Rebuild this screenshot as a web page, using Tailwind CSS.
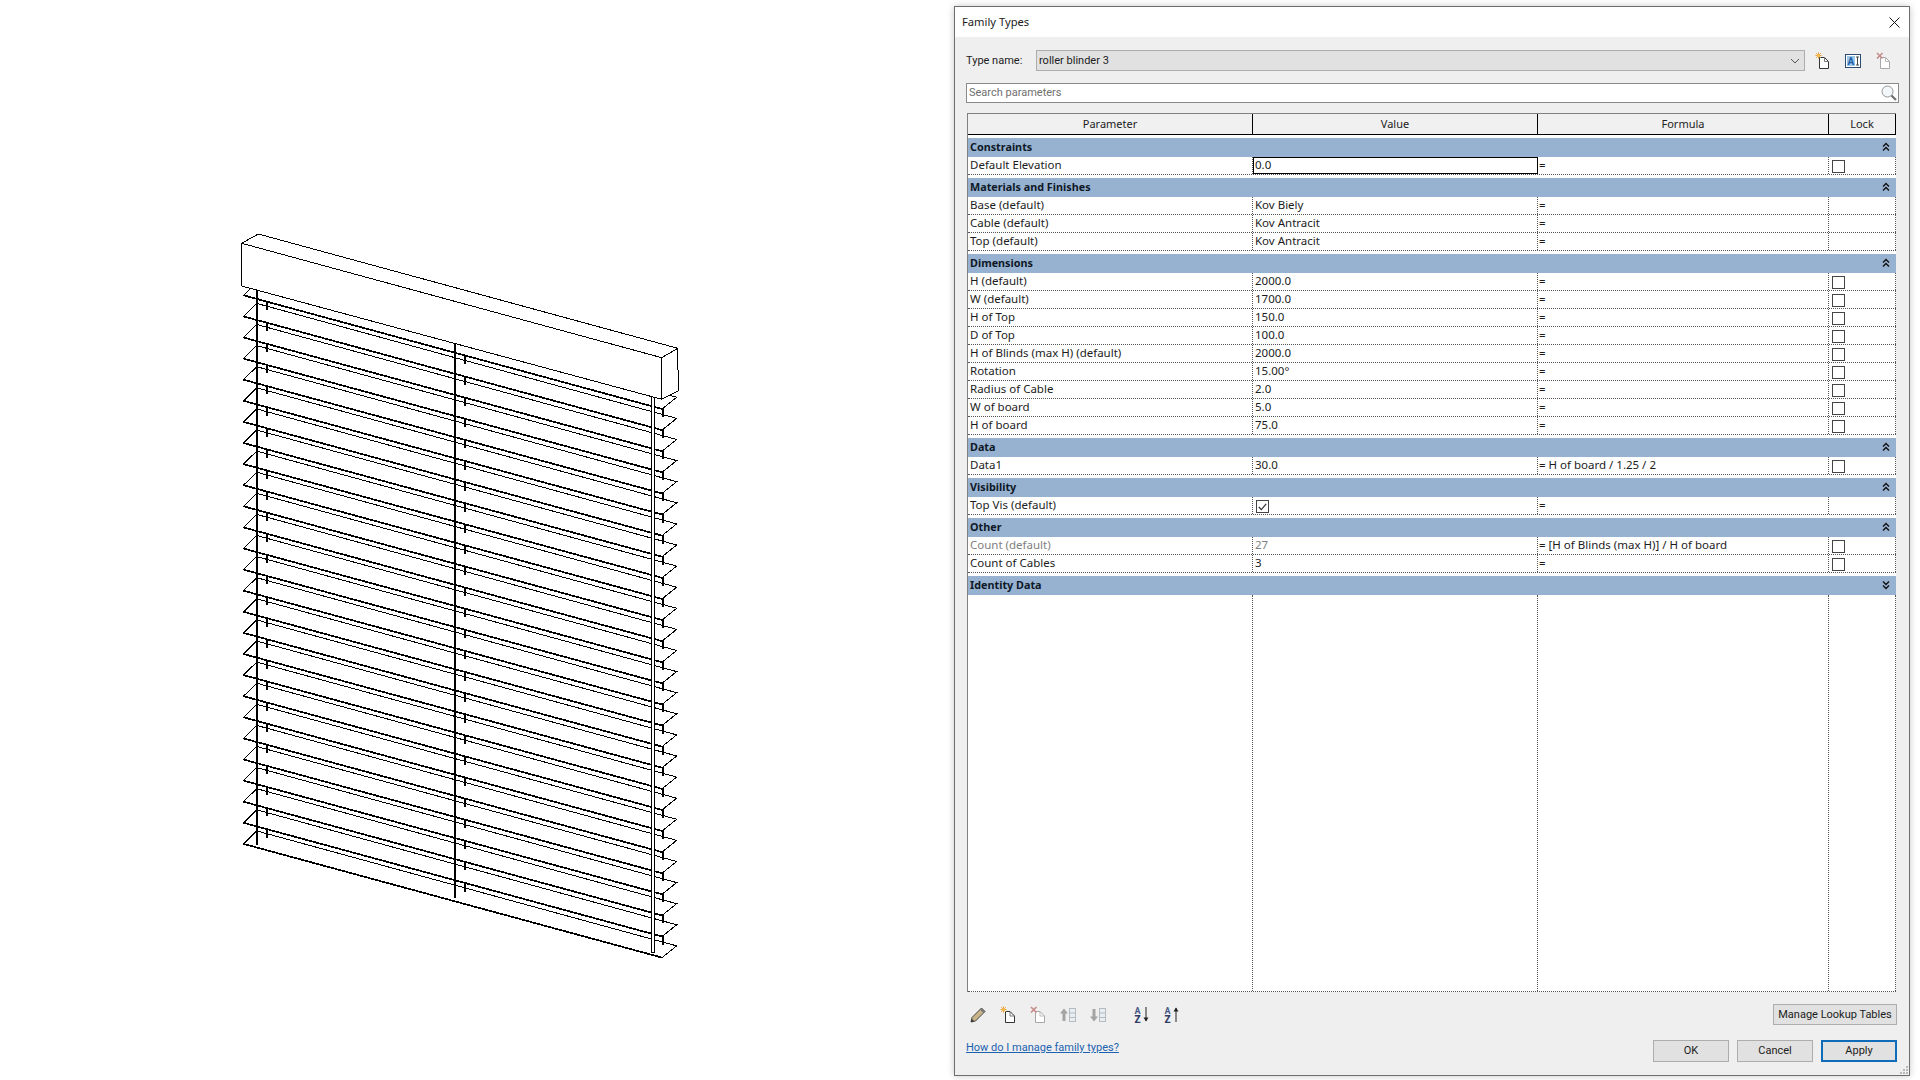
<!DOCTYPE html>
<html lang="en">
<head>
  <meta charset="UTF-8">
  <title>Family Types</title>
  <script src="https://cdn.jsdelivr.net/npm/@tailwindcss/browser@4"></script>
</head>
<body class="bg-white h-screen overflow-hidden flex font-['Noto_Sans',sans-serif] text-[11.5px] leading-[16px] text-[#1c1c1c]">

  <!-- Model view -->
  <div class="w-[954px] h-[1080px] shrink-0">
    <svg id="blinds" width="954" height="1080" viewBox="0 0 954 1080" shape-rendering="crispEdges"></svg>
  </div>

  <!-- Dialog -->
  <div class="w-[956px] h-[1070px] mt-[6px] shrink-0 flex flex-col bg-[#efefef] border border-[#6e6e6e] shadow-[0_0_7px_rgba(0,0,0,0.22)] relative">

    <div class="h-[30px] shrink-0 bg-white flex items-center justify-between pl-[7px] pr-[9px]">
      <span class="text-[11.2px]">Family Types</span>
      <svg width="11" height="11" viewBox="0 0 11 11" fill="none" stroke="#111" stroke-width="1"><path d="M0.5 0.5 10.5 10.5M10.5 0.5 0.5 10.5"/></svg>
    </div>

    <div class="flex-1 flex flex-col pl-[11px] pr-[10px] pb-[13px] min-h-0">
      <!-- Type name -->
      <div class="mt-[13px] h-[21px] shrink-0 flex items-center font-['Roboto',sans-serif] text-[11px]">
        <span class="w-[70px] shrink-0">Type name:</span>
        <div class="w-[769px] h-[21px] shrink-0 bg-[#e1e1e1] border border-[#adadad] flex items-center justify-between pl-[2px] pr-[4px]">
          <span>roller blinder 3</span>
          <svg width="10" height="6" viewBox="0 0 10 6" fill="none" stroke="#555"><path d="M1 1 5 5 9 1"/></svg>
        </div>
        <div class="ml-[10px] w-[15px] h-[17px]">
          <svg width="15" height="17" viewBox="0 0 15 17" fill="none">
            <path d="M4.5 5.5H9.5L13.5 9.5V16.5H4.5Z" fill="#fff" stroke="#333"/><path d="M9.5 5.5V9.5H13.5" stroke="#777"/>
            <path d="M3.5 0.5V6.5M0.5 3.5H6.5M1.3 1.3 5.7 5.7M5.7 1.3 1.3 5.7" stroke="#e39a2c"/>
            <circle cx="3.5" cy="3.5" r="1.8" fill="#f2b752"/>
          </svg>
        </div>
        <div class="ml-[15px] w-[16px] h-[14px]">
          <svg width="16" height="14" viewBox="0 0 16 14" fill="none">
            <rect x="0.5" y="0.5" width="15" height="13" fill="#fff" stroke="#2c4a72"/>
            <rect x="2" y="2" width="8" height="10" fill="#9cc6ea"/>
            <text x="2.5" y="11" font-size="10" font-weight="700" fill="#1b5ea6">A</text>
            <path d="M11 3H14M11 11H14M12.5 3V11" stroke="#444"/>
          </svg>
        </div>
        <div class="ml-[15px] w-[15px] h-[17px]">
          <svg width="15" height="17" viewBox="0 0 15 17" fill="none">
            <path d="M4.5 5.5H9.5L13.5 9.5V16.5H4.5Z" fill="#fff" stroke="#a8a8a8"/><path d="M9.5 5.5V9.5H13.5" stroke="#bbb"/>
            <path d="M1 1 6.5 6.5M6.5 1 1 6.5" stroke="#c78a86" stroke-width="1.6"/>
          </svg>
        </div>
      </div>

      <!-- Search -->
      <div class="mt-[12px] h-[20px] shrink-0 bg-white border border-[#8a8a8a] flex items-center justify-between pl-[2px] pr-[1px] font-['Roboto',sans-serif] text-[11px]">
        <span class="text-[#6f6f6f] pb-[1px]">Search parameters</span>
        <svg width="16" height="16" viewBox="0 0 16 16" fill="none">
          <circle cx="6.5" cy="6.5" r="5.5" fill="#f3f7fa" stroke="#8d9499"/>
          <path d="M10.5 10.5 15 15" stroke="#6f6f6f" stroke-width="2.2"/>
        </svg>
      </div>

      <!-- Parameter table -->
      <div class="mt-[10px] ml-[1px] mr-[3px] flex-1 min-h-0 flex flex-col bg-white border-t border-l border-[#808080]">
        <div class="h-[21px] shrink-0 grid grid-cols-[285px_285px_291px_67px] bg-[#f0f0f0] border-b border-black text-[11px]">
          <div class="border-r border-black flex items-center justify-center">Parameter</div>
          <div class="border-r border-black flex items-center justify-center">Value</div>
          <div class="border-r border-black flex items-center justify-center">Formula</div>
          <div class="border-r border-black flex items-center justify-center">Lock</div>
        </div>

        <!-- Constraints -->
        <div class="mt-[3px] h-[19px] shrink-0 bg-[#97b2d1] flex items-center justify-between pl-[2px] pr-[6px] pb-[1px] font-bold text-[10.8px] text-[#0e1826]">
          <span>Constraints</span>
          <svg width="8" height="10" viewBox="0 0 8 10" fill="none" stroke="#111" stroke-width="1.4"><path d="M1 4.5 4 1.5 7 4.5M1 8.5 4 5.5 7 8.5"/></svg>
        </div>
        <div class="h-[18px] shrink-0 grid grid-cols-[285px_285px_291px_67px] border-b border-dotted border-[#555]">
          <div class="border-r border-dotted border-[#555] pl-[2px]">Default Elevation</div>
          <div class="border border-black pl-[1px] leading-[14px]">0.0</div>
          <div class="border-r border-dotted border-[#555] pl-[1px]">=</div>
          <div class="border-r border-dotted border-[#555] pl-[3px] pt-[3px]"><div class="w-[13px] h-[13px] bg-white border border-[#444]"></div></div>
        </div>

        <!-- Materials and Finishes -->
        <div class="mt-[3px] h-[19px] shrink-0 bg-[#97b2d1] flex items-center justify-between pl-[2px] pr-[6px] pb-[1px] font-bold text-[10.8px] text-[#0e1826]">
          <span>Materials and Finishes</span>
          <svg width="8" height="10" viewBox="0 0 8 10" fill="none" stroke="#111" stroke-width="1.4"><path d="M1 4.5 4 1.5 7 4.5M1 8.5 4 5.5 7 8.5"/></svg>
        </div>
        <div class="h-[18px] shrink-0 grid grid-cols-[285px_285px_291px_67px] border-b border-dotted border-[#555]">
          <div class="border-r border-dotted border-[#555] pl-[2px]">Base (default)</div>
          <div class="border-r border-dotted border-[#555] pl-[2px]">Kov Biely</div>
          <div class="border-r border-dotted border-[#555] pl-[1px]">=</div>
          <div class="border-r border-dotted border-[#555]"></div>
        </div>
        <div class="h-[18px] shrink-0 grid grid-cols-[285px_285px_291px_67px] border-b border-dotted border-[#555]">
          <div class="border-r border-dotted border-[#555] pl-[2px]">Cable (default)</div>
          <div class="border-r border-dotted border-[#555] pl-[2px]">Kov Antracit</div>
          <div class="border-r border-dotted border-[#555] pl-[1px]">=</div>
          <div class="border-r border-dotted border-[#555]"></div>
        </div>
        <div class="h-[18px] shrink-0 grid grid-cols-[285px_285px_291px_67px] border-b border-dotted border-[#555]">
          <div class="border-r border-dotted border-[#555] pl-[2px]">Top (default)</div>
          <div class="border-r border-dotted border-[#555] pl-[2px]">Kov Antracit</div>
          <div class="border-r border-dotted border-[#555] pl-[1px]">=</div>
          <div class="border-r border-dotted border-[#555]"></div>
        </div>

        <!-- Dimensions -->
        <div class="mt-[3px] h-[19px] shrink-0 bg-[#97b2d1] flex items-center justify-between pl-[2px] pr-[6px] pb-[1px] font-bold text-[10.8px] text-[#0e1826]">
          <span>Dimensions</span>
          <svg width="8" height="10" viewBox="0 0 8 10" fill="none" stroke="#111" stroke-width="1.4"><path d="M1 4.5 4 1.5 7 4.5M1 8.5 4 5.5 7 8.5"/></svg>
        </div>
        <div class="h-[18px] shrink-0 grid grid-cols-[285px_285px_291px_67px] border-b border-dotted border-[#555]">
          <div class="border-r border-dotted border-[#555] pl-[2px]">H (default)</div>
          <div class="border-r border-dotted border-[#555] pl-[2px]">2000.0</div>
          <div class="border-r border-dotted border-[#555] pl-[1px]">=</div>
          <div class="border-r border-dotted border-[#555] pl-[3px] pt-[3px]"><div class="w-[13px] h-[13px] bg-white border border-[#444]"></div></div>
        </div>
        <div class="h-[18px] shrink-0 grid grid-cols-[285px_285px_291px_67px] border-b border-dotted border-[#555]">
          <div class="border-r border-dotted border-[#555] pl-[2px]">W (default)</div>
          <div class="border-r border-dotted border-[#555] pl-[2px]">1700.0</div>
          <div class="border-r border-dotted border-[#555] pl-[1px]">=</div>
          <div class="border-r border-dotted border-[#555] pl-[3px] pt-[3px]"><div class="w-[13px] h-[13px] bg-white border border-[#444]"></div></div>
        </div>
        <div class="h-[18px] shrink-0 grid grid-cols-[285px_285px_291px_67px] border-b border-dotted border-[#555]">
          <div class="border-r border-dotted border-[#555] pl-[2px]">H of Top</div>
          <div class="border-r border-dotted border-[#555] pl-[2px]">150.0</div>
          <div class="border-r border-dotted border-[#555] pl-[1px]">=</div>
          <div class="border-r border-dotted border-[#555] pl-[3px] pt-[3px]"><div class="w-[13px] h-[13px] bg-white border border-[#444]"></div></div>
        </div>
        <div class="h-[18px] shrink-0 grid grid-cols-[285px_285px_291px_67px] border-b border-dotted border-[#555]">
          <div class="border-r border-dotted border-[#555] pl-[2px]">D of Top</div>
          <div class="border-r border-dotted border-[#555] pl-[2px]">100.0</div>
          <div class="border-r border-dotted border-[#555] pl-[1px]">=</div>
          <div class="border-r border-dotted border-[#555] pl-[3px] pt-[3px]"><div class="w-[13px] h-[13px] bg-white border border-[#444]"></div></div>
        </div>
        <div class="h-[18px] shrink-0 grid grid-cols-[285px_285px_291px_67px] border-b border-dotted border-[#555]">
          <div class="border-r border-dotted border-[#555] pl-[2px]">H of Blinds (max H) (default)</div>
          <div class="border-r border-dotted border-[#555] pl-[2px]">2000.0</div>
          <div class="border-r border-dotted border-[#555] pl-[1px]">=</div>
          <div class="border-r border-dotted border-[#555] pl-[3px] pt-[3px]"><div class="w-[13px] h-[13px] bg-white border border-[#444]"></div></div>
        </div>
        <div class="h-[18px] shrink-0 grid grid-cols-[285px_285px_291px_67px] border-b border-dotted border-[#555]">
          <div class="border-r border-dotted border-[#555] pl-[2px]">Rotation</div>
          <div class="border-r border-dotted border-[#555] pl-[2px]">15.00°</div>
          <div class="border-r border-dotted border-[#555] pl-[1px]">=</div>
          <div class="border-r border-dotted border-[#555] pl-[3px] pt-[3px]"><div class="w-[13px] h-[13px] bg-white border border-[#444]"></div></div>
        </div>
        <div class="h-[18px] shrink-0 grid grid-cols-[285px_285px_291px_67px] border-b border-dotted border-[#555]">
          <div class="border-r border-dotted border-[#555] pl-[2px]">Radius of Cable</div>
          <div class="border-r border-dotted border-[#555] pl-[2px]">2.0</div>
          <div class="border-r border-dotted border-[#555] pl-[1px]">=</div>
          <div class="border-r border-dotted border-[#555] pl-[3px] pt-[3px]"><div class="w-[13px] h-[13px] bg-white border border-[#444]"></div></div>
        </div>
        <div class="h-[18px] shrink-0 grid grid-cols-[285px_285px_291px_67px] border-b border-dotted border-[#555]">
          <div class="border-r border-dotted border-[#555] pl-[2px]">W of board</div>
          <div class="border-r border-dotted border-[#555] pl-[2px]">5.0</div>
          <div class="border-r border-dotted border-[#555] pl-[1px]">=</div>
          <div class="border-r border-dotted border-[#555] pl-[3px] pt-[3px]"><div class="w-[13px] h-[13px] bg-white border border-[#444]"></div></div>
        </div>
        <div class="h-[18px] shrink-0 grid grid-cols-[285px_285px_291px_67px] border-b border-dotted border-[#555]">
          <div class="border-r border-dotted border-[#555] pl-[2px]">H of board</div>
          <div class="border-r border-dotted border-[#555] pl-[2px]">75.0</div>
          <div class="border-r border-dotted border-[#555] pl-[1px]">=</div>
          <div class="border-r border-dotted border-[#555] pl-[3px] pt-[3px]"><div class="w-[13px] h-[13px] bg-white border border-[#444]"></div></div>
        </div>

        <!-- Data -->
        <div class="mt-[3px] h-[19px] shrink-0 bg-[#97b2d1] flex items-center justify-between pl-[2px] pr-[6px] pb-[1px] font-bold text-[10.8px] text-[#0e1826]">
          <span>Data</span>
          <svg width="8" height="10" viewBox="0 0 8 10" fill="none" stroke="#111" stroke-width="1.4"><path d="M1 4.5 4 1.5 7 4.5M1 8.5 4 5.5 7 8.5"/></svg>
        </div>
        <div class="h-[18px] shrink-0 grid grid-cols-[285px_285px_291px_67px] border-b border-dotted border-[#555]">
          <div class="border-r border-dotted border-[#555] pl-[2px]">Data1</div>
          <div class="border-r border-dotted border-[#555] pl-[2px]">30.0</div>
          <div class="border-r border-dotted border-[#555] pl-[1px]">= H of board / 1.25 / 2</div>
          <div class="border-r border-dotted border-[#555] pl-[3px] pt-[3px]"><div class="w-[13px] h-[13px] bg-white border border-[#444]"></div></div>
        </div>

        <!-- Visibility -->
        <div class="mt-[3px] h-[19px] shrink-0 bg-[#97b2d1] flex items-center justify-between pl-[2px] pr-[6px] pb-[1px] font-bold text-[10.8px] text-[#0e1826]">
          <span>Visibility</span>
          <svg width="8" height="10" viewBox="0 0 8 10" fill="none" stroke="#111" stroke-width="1.4"><path d="M1 4.5 4 1.5 7 4.5M1 8.5 4 5.5 7 8.5"/></svg>
        </div>
        <div class="h-[18px] shrink-0 grid grid-cols-[285px_285px_291px_67px] border-b border-dotted border-[#555]">
          <div class="border-r border-dotted border-[#555] pl-[2px]">Top Vis (default)</div>
          <div class="border-r border-dotted border-[#555] pl-[3px] pt-[3px]">
            <div class="w-[13px] h-[13px] bg-white border border-[#444] flex items-center justify-center">
              <svg width="9" height="8" viewBox="0 0 9 8" fill="none" stroke="#333" stroke-width="1.2"><path d="M0.8 4 3.3 6.6 8.2 0.8"/></svg>
            </div>
          </div>
          <div class="border-r border-dotted border-[#555] pl-[1px]">=</div>
          <div class="border-r border-dotted border-[#555]"></div>
        </div>

        <!-- Other -->
        <div class="mt-[3px] h-[19px] shrink-0 bg-[#97b2d1] flex items-center justify-between pl-[2px] pr-[6px] pb-[1px] font-bold text-[10.8px] text-[#0e1826]">
          <span>Other</span>
          <svg width="8" height="10" viewBox="0 0 8 10" fill="none" stroke="#111" stroke-width="1.4"><path d="M1 4.5 4 1.5 7 4.5M1 8.5 4 5.5 7 8.5"/></svg>
        </div>
        <div class="h-[18px] shrink-0 grid grid-cols-[285px_285px_291px_67px] border-b border-dotted border-[#555]">
          <div class="border-r border-dotted border-[#555] pl-[2px] text-[#808080]">Count (default)</div>
          <div class="border-r border-dotted border-[#555] pl-[2px] text-[#808080]">27</div>
          <div class="border-r border-dotted border-[#555] pl-[1px]">= [H of Blinds (max H)] / H of board</div>
          <div class="border-r border-dotted border-[#555] pl-[3px] pt-[3px]"><div class="w-[13px] h-[13px] bg-white border border-[#444]"></div></div>
        </div>
        <div class="h-[18px] shrink-0 grid grid-cols-[285px_285px_291px_67px] border-b border-dotted border-[#555]">
          <div class="border-r border-dotted border-[#555] pl-[2px]">Count of Cables</div>
          <div class="border-r border-dotted border-[#555] pl-[2px]">3</div>
          <div class="border-r border-dotted border-[#555] pl-[1px]">=</div>
          <div class="border-r border-dotted border-[#555] pl-[3px] pt-[3px]"><div class="w-[13px] h-[13px] bg-white border border-[#444]"></div></div>
        </div>

        <!-- Identity Data -->
        <div class="mt-[3px] h-[19px] shrink-0 bg-[#97b2d1] flex items-center justify-between pl-[2px] pr-[6px] pb-[1px] font-bold text-[10.8px] text-[#0e1826]">
          <span>Identity Data</span>
          <svg width="8" height="10" viewBox="0 0 8 10" fill="none" stroke="#111" stroke-width="1.4"><path d="M1 1.5 4 4.5 7 1.5M1 5.5 4 8.5 7 5.5"/></svg>
        </div>

        <!-- Empty remainder -->
        <div class="flex-1 min-h-0 grid grid-cols-[285px_285px_291px_67px] border-b border-dotted border-[#555]">
          <div class="border-r border-dotted border-[#555]"></div>
          <div class="border-r border-dotted border-[#555]"></div>
          <div class="border-r border-dotted border-[#555]"></div>
          <div class="border-r border-dotted border-[#555]"></div>
        </div>
      </div>

      <!-- Bottom toolbar -->
      <div class="mt-[12px] mr-[2px] h-[21px] shrink-0 flex items-center justify-between pl-[4px] font-['Roboto',sans-serif] text-[11px]">
        <div class="flex items-center gap-[14px]">
          <svg width="16" height="17" viewBox="0 0 16 17" fill="none">
            <path d="M1 16 2 11.5 11.5 2 15 5.5 5.5 15Z" fill="#c9b48a" stroke="#444"/>
            <path d="M11.5 2 15 5.5 13.4 7.1 9.9 3.6Z" fill="#777"/>
            <path d="M1 16 2 13 4 15Z" fill="#333"/>
          </svg>
          <svg width="16" height="17" viewBox="0 0 16 17" fill="none">
            <path d="M5.5 5.5H10L14.5 10V16.5H5.5Z" fill="#fff" stroke="#333"/><path d="M10 5.5V10H14.5" stroke="#777"/>
            <path d="M3.5 0.5V6.5M0.5 3.5H6.5M1.3 1.3 5.7 5.7M5.7 1.3 1.3 5.7" stroke="#e39a2c"/>
            <circle cx="3.5" cy="3.5" r="1.8" fill="#f2b752"/>
          </svg>
          <svg width="16" height="17" viewBox="0 0 16 17" fill="none">
            <path d="M5.5 5.5H10L14.5 10V16.5H5.5Z" fill="#fff" stroke="#a8a8a8"/><path d="M10 5.5V10H14.5" stroke="#bbb"/>
            <path d="M1 1 6.5 6.5M6.5 1 1 6.5" stroke="#c78a86" stroke-width="1.6"/>
          </svg>
          <svg width="16" height="16" viewBox="0 0 16 16" fill="none">
            <path d="M4 1.5 8 6.5H5.5V14H2.5V6.5H0Z" fill="#a3a3a3"/>
            <rect x="9.5" y="1.5" width="6" height="13" fill="#e8eef2" stroke="#b4bcc2"/><path d="M9.5 6H15.5M9.5 10.5H15.5" stroke="#b4bcc2"/>
          </svg>
          <svg width="16" height="16" viewBox="0 0 16 16" fill="none">
            <path d="M4 14.5 8 9.5H5.5V2H2.5V9.5H0Z" fill="#a3a3a3"/>
            <rect x="9.5" y="1.5" width="6" height="13" fill="#e8eef2" stroke="#b4bcc2"/><path d="M9.5 6H15.5M9.5 10.5H15.5" stroke="#b4bcc2"/>
          </svg>
          <svg class="ml-[14px]" width="16" height="17" viewBox="0 0 16 17" fill="none">
            <text x="0.5" y="8" font-size="9" font-weight="700" fill="#4a5a86">A</text>
            <text x="0.5" y="16.5" font-size="10" font-weight="800" fill="#2f3c66">Z</text>
            <path d="M12 1V15" stroke="#222"/><path d="M9.5 11.5H14.5L12 15.5Z" fill="#222"/>
          </svg>
          <svg width="16" height="17" viewBox="0 0 16 17" fill="none">
            <text x="0.5" y="8" font-size="9" font-weight="700" fill="#4a5a86">A</text>
            <text x="0.5" y="16.5" font-size="10" font-weight="800" fill="#2f3c66">Z</text>
            <path d="M12 2V16" stroke="#222"/><path d="M9.5 5.5H14.5L12 1.5Z" fill="#222"/>
          </svg>
        </div>
        <div class="w-[124px] h-[21px] bg-[#e1e1e1] border border-[#adadad] flex items-center justify-center whitespace-nowrap">Manage Lookup Tables</div>
      </div>

      <!-- Link and buttons -->
      <div class="mt-[15px] mr-[2px] h-[22px] shrink-0 flex items-center justify-between font-['Roboto',sans-serif] text-[11px]">
        <a class="text-[#1c62b0] underline pb-[6px]" href="#">How do I manage family types?</a>
        <div class="flex gap-[8px]">
          <div class="w-[76px] h-[22px] bg-[#e1e1e1] border border-[#adadad] flex items-center justify-center">OK</div>
          <div class="w-[76px] h-[22px] bg-[#e1e1e1] border border-[#adadad] flex items-center justify-center">Cancel</div>
          <div class="w-[76px] h-[22px] bg-[#e1e1e1] border-2 border-[#0f6cb8] flex items-center justify-center">Apply</div>
        </div>
      </div>
    </div>

    <!-- Resize grip -->
    <svg class="absolute right-0 bottom-0" width="10" height="10" viewBox="0 0 10 10" fill="#b9b9b9">
      <rect x="7" y="1" width="2" height="2"/><rect x="4" y="4" width="2" height="2"/><rect x="7" y="4" width="2" height="2"/>
      <rect x="1" y="7" width="2" height="2"/><rect x="4" y="7" width="2" height="2"/><rect x="7" y="7" width="2" height="2"/>
    </svg>
  </div>

  <script>
    // 27 slats, cables and the head box of the blind
    const line = (x1, y1, x2, y2, w) => `<line x1="${x1}" y1="${y1}" x2="${x2}" y2="${y2}" stroke="#000" stroke-width="${w}"/>`;
    let out = '';
    for (let i = 0; i < 27; i++) {
      const y = 295.3 + 21.1 * i;
      out += `<path d="M243.5 ${y}L256.7 ${y - 13}L676.7 ${y + 102}L662 ${y + 113.7}Z" fill="none" stroke="#000"/>`;
      out += line(243.5, y, 662, y + 113.7, 1.7);
    }
    for (let i = 0; i < 26; i++) {
      const d = 21.1 * i;
      out += line(267, 301.7 + d, 267, 310 + d, 2);
      out += line(465, 355.5 + d, 465, 364 + d, 2);
      out += line(663, 408 + d, 663, 417 + d, 2);
    }
    out += line(257, 280, 257, 845, 2);
    out += line(455, 330, 455, 898, 2);
    out += '<rect x="651.5" y="390" width="3" height="562" fill="#fff" stroke="#000"/>';
    out += '<path d="M241.7 243.3 258.3 234 677.7 348.3 661.7 357.7Z" fill="#fff" stroke="#000"/>';
    out += '<path d="M241.7 243.3 661.7 357.7 661.7 399.3 241.7 286Z" fill="#fff" stroke="#000"/>';
    out += '<path d="M661.7 357.7 677.7 348.3 678.3 391 661.7 399.3Z" fill="#fff" stroke="#000"/>';
    document.getElementById('blinds').innerHTML = out;
  </script>
</body>
</html>
